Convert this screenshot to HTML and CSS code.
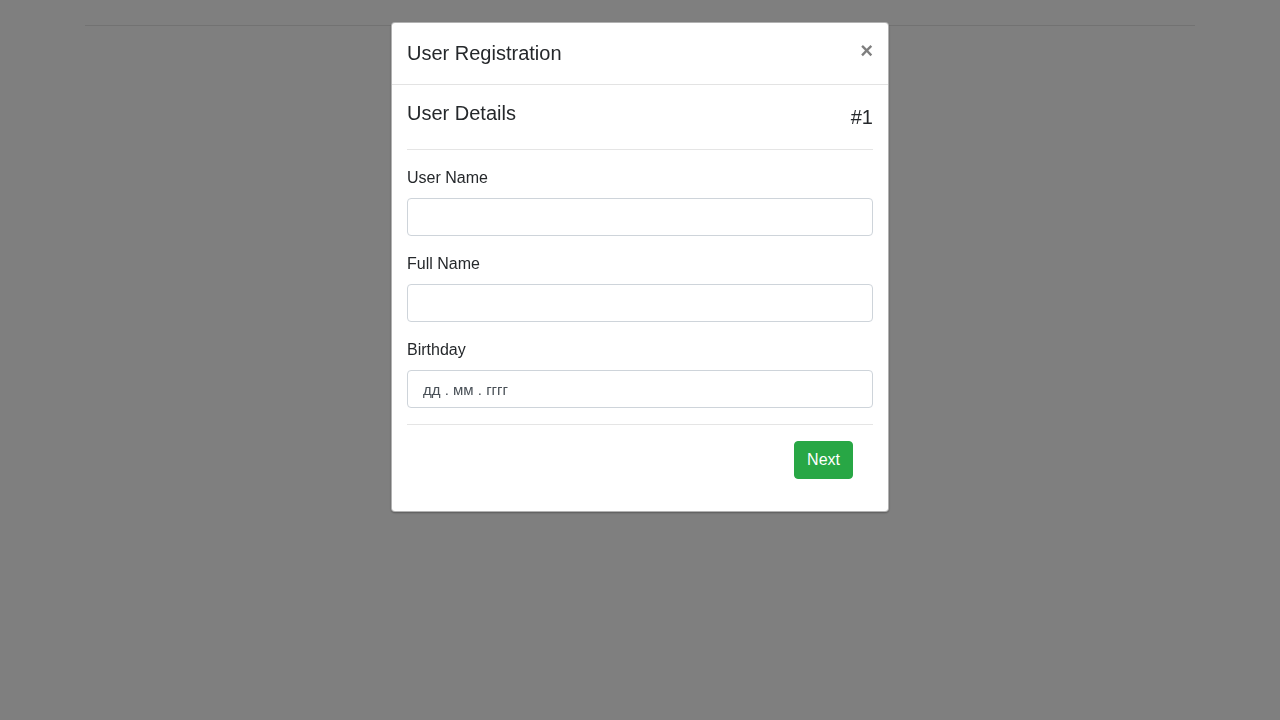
FILE: index.html
```html
<!DOCTYPE html>
<html lang="en">
  <head>
    <meta charset="UTF-8" />
    <meta name="viewport" content="width=device-width, initial-scale=1.0" />
    <title>User Registration</title>
    <link rel="stylesheet" href="styles.css">
  </head>
  <body>
    <div class="container">
      <hr class="page-line">
    </div>

    <!-- Registration modal -->
    <div class="modal-backdrop"></div>
    <div class="modal">
      <div class="modal-dialog">
        <div class="modal-header">
          <h5 class="modal-title">User Registration</h5>
          <button class="close-btn" type="button">&times;</button>
        </div>

        <div class="modal-body">
          <div class="step-head">
            <h5 class="step-title">User Details</h5>
            <span class="step-num">#1</span>
          </div>
          <hr>

          <div class="form-group">
            <label for="userName">User Name</label>
            <input id="userName" class="form-control" type="text">
          </div>
          <div class="form-group">
            <label for="fullName">Full Name</label>
            <input id="fullName" class="form-control" type="text">
          </div>
          <div class="form-group">
            <label for="birthday">Birthday</label>
            <input id="birthday" class="form-control date-field" type="text" placeholder="дд . мм . гггг">
          </div>
          <hr>

          <div class="form-actions">
            <button class="btn-next" type="button">Next</button>
          </div>
        </div>
      </div>
    </div>
  </body>
</html>
```

FILE: styles.css
```css
/* General Styling */
* {
  margin: 0;
  padding: 0;
  box-sizing: border-box;
}

body {
  font-family: "Liberation Sans", Arial, sans-serif;
  font-size: 16px;
  color: #25282b;
  background-color: #fff;
  min-height: 100vh;
}

.container {
  width: 1140px;
  margin: 0 auto;
  padding: 25px 15px 0;
}

hr {
  border: 0;
  border-top: 1px solid rgba(0, 0, 0, 0.1);
  margin: 16px 0;
}

.page-line {
  margin: 0;
}

/* Modal styling */
.modal-backdrop {
  position: fixed;
  top: 0;
  left: 0;
  width: 100%;
  height: 100%;
  background-color: rgba(0, 0, 0, 0.5);
}

.modal {
  position: fixed;
  top: 0;
  left: 0;
  width: 100%;
  height: 100%;
}

.modal-dialog {
  width: 498px;
  margin: 22px auto 0;
  background-color: #fff;
  border: 1px solid rgba(0, 0, 0, 0.3);
  border-radius: 4px;
  box-shadow: 0 1px 2px rgba(0, 0, 0, 0.3);
}

.modal-header {
  display: flex;
  align-items: flex-start;
  padding: 18px 15px 19px;
  border-bottom: 1px solid #e3e3e3;
}

.modal-title {
  font-size: 20px;
  font-weight: normal;
  line-height: 24px;
}

.close-btn {
  margin-left: auto;
  margin-top: -2px;
  background: none;
  border: none;
  font-family: "Liberation Sans", Arial, sans-serif;
  font-size: 22px;
  font-weight: bold;
  line-height: 24px;
  color: #000;
  opacity: 0.5;
  text-shadow: 0 1px 0 #fff;
  cursor: pointer;
}

.modal-body {
  padding: 16px 15px;
}

.step-head {
  display: flex;
  justify-content: space-between;
  align-items: flex-start;
  margin-bottom: 1px;
}

.step-title {
  font-size: 20px;
  font-weight: normal;
  line-height: 24px;
}

.step-num {
  font-size: 20px;
  line-height: 32px;
}

.form-group {
  margin-bottom: 16px;
}

.form-group label {
  display: block;
  line-height: 24px;
  margin-bottom: 8px;
}

.form-control {
  display: block;
  width: 100%;
  height: 38px;
  padding: 6px 12px;
  font-family: "Liberation Sans", Arial, sans-serif;
  font-size: 16px;
  color: #495057;
  background-color: #fff;
  border: 1px solid #ced4da;
  border-radius: 4px;
  outline: none;
}

.date-field {
  padding-left: 15px;
  font-size: 15px;
}

.date-field::placeholder {
  color: #495057;
  opacity: 1;
}

.form-actions {
  display: flex;
  justify-content: flex-end;
  padding-right: 20px;
  margin-bottom: 16px;
}

.btn-next {
  padding: 6px 12px;
  font-family: "Liberation Sans", Arial, sans-serif;
  font-size: 16px;
  line-height: 24px;
  color: #fff;
  background-color: #28a745;
  border: 1px solid #28a745;
  border-radius: 4px;
  cursor: pointer;
}
```
